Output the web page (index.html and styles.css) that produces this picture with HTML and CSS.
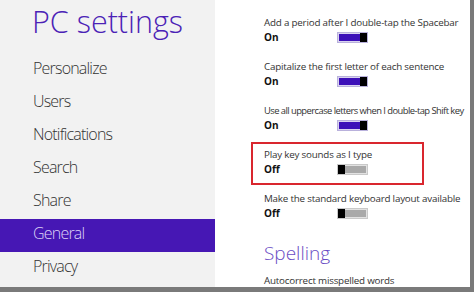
FILE: index.html
```html
<!DOCTYPE html>
<html lang="en">
<head>
    <meta charset="UTF-8">
    <title>PC settings</title>
    <link rel="stylesheet" href="styles.css">
</head>
<body>
    <div id="window">
        <div id="sidebar">
            <h1 id="title">PC settings</h1>
            <ul id="nav">
                <li>Personalize</li>
                <li>Users</li>
                <li>Notifications</li>
                <li>Search</li>
                <li>Share</li>
                <li class="selected">General</li>
                <li>Privacy</li>
            </ul>
        </div>

        <div id="content">
            <div class="option">
                <p class="label">Add a period after I double-tap the Spacebar</p>
                <div class="state"><span>On</span><span class="toggle on"><i></i></span></div>
            </div>
            <div class="option">
                <p class="label">Capitalize the first letter of each sentence</p>
                <div class="state"><span>On</span><span class="toggle on"><i></i></span></div>
            </div>
            <div class="option">
                <p class="label tight">Use all uppercase letters when I double-tap Shift key</p>
                <div class="state"><span>On</span><span class="toggle on"><i></i></span></div>
            </div>
            <div class="option marked">
                <p class="label">Play key sounds as I type</p>
                <div class="state"><span>Off</span><span class="toggle off"><i></i></span></div>
            </div>
            <div class="option">
                <p class="label">Make the standard keyboard layout available</p>
                <div class="state"><span>Off</span><span class="toggle off"><i></i></span></div>
            </div>

            <h2 class="section">Spelling</h2>
            <p class="label">Autocorrect misspelled words</p>
        </div>
    </div>
</body>
</html>
```

FILE: styles.css
```css
* {margin: 0; padding: 0;}

body {
    font-family: "Open Sans", "Noto Sans", sans-serif;
    background-color: #7a7a7a;
    width: 474px;
    height: 292px;
    overflow: hidden;
}

#window {
    display: flex;
    width: 470px;
    height: 287px;
    background-color: #fff;
}

#sidebar {
    width: 215px;
    flex-shrink: 0;
    background-color: #f2f2f2;
}
#title {
    font-size: 30.5px;
    font-weight: 300;
    line-height: 43px;
    color: #4b22b6;
    padding-left: 32px;
    margin-bottom: 11px;
}
#nav {
    list-style: none;
}
#nav li {
    height: 33px;
    line-height: 29px;
    padding-left: 33px;
    font-size: 16px;
    font-weight: 300;
    letter-spacing: -0.8px;
    color: #333;
}
#nav li.selected {
    background-color: #4617b4;
    color: #ddd4f7;
}

#content {
    flex: 1;
    min-width: 0;
    padding: 16px 0 0 49px;
}
.option {
    height: 44px;
    position: relative;
}
.label {
    font-size: 9.8px;
    line-height: 14px;
    letter-spacing: -0.2px;
    color: #333;
    white-space: nowrap;
}
.label.tight {
    font-size: 9.4px;
    letter-spacing: -0.55px;
}
.state {
    display: flex;
    align-items: center;
    height: 14px;
    font-size: 10px;
    font-weight: bold;
    color: #111;
}
.state span:first-child {
    width: 73px;
}

.toggle {
    display: flex;
    width: 31px;
    height: 11px;
    box-sizing: border-box;
    border: 1px solid #b9b1dc;
}
.toggle i {
    width: 7px;
    background-color: #000;
}
.toggle.on {
    background-color: #3c10b8;
    justify-content: flex-end;
    box-shadow: inset 0 0 0 1px #d9d3ef;
}
.toggle.off {
    background-color: #a9a9a9;
    border-color: #c9c9c9;
    box-shadow: inset 0 0 0 1px #e2e2e2;
}

/* red annotation box drawn over the option */
.marked::after {
    content: '';
    position: absolute;
    top: -6px;
    left: -13px;
    width: 169px;
    height: 39px;
    border: 2px solid #d9262e;
}

.section {
    font-size: 19px;
    font-weight: 300;
    line-height: 24px;
    color: #6a4cc4;
    margin-top: 5px;
    margin-bottom: 9px;
}
```
